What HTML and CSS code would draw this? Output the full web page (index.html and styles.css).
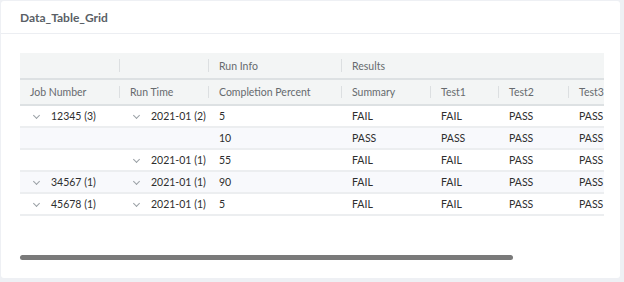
FILE: index.html
```html
<!DOCTYPE html>
<html>
<head>
<meta charset="utf-8">
<link rel="stylesheet" href="styles.css">
</head>
<body>
<div class="card">
  <div class="card-head">Data_Table_Grid</div>
  <div class="card-body">
    <div class="viewport">
      <table class="grid">
        <colgroup>
          <col class="c1"><col class="c2"><col class="c3"><col class="c4"><col class="c5"><col class="c6"><col class="c7">
        </colgroup>
        <thead>
          <tr class="group-row">
            <th class="sep"></th>
            <th class="sep"></th>
            <th class="sep">Run Info</th>
            <th colspan="4">Results</th>
          </tr>
          <tr class="head-row">
            <th class="sep">Job Number</th>
            <th class="sep">Run Time</th>
            <th class="sep">Completion Percent</th>
            <th class="sep">Summary</th>
            <th class="sep">Test1</th>
            <th class="sep">Test2</th>
            <th>Test3</th>
          </tr>
        </thead>
        <tbody>
          <tr>
            <td><span class="chev"></span>12345 (3)</td>
            <td><span class="chev"></span>2021-01 (2)</td>
            <td>5</td><td>FAIL</td><td>FAIL</td><td>PASS</td><td>PASS</td>
          </tr>
          <tr class="alt">
            <td></td><td></td>
            <td>10</td><td>PASS</td><td>PASS</td><td>PASS</td><td>PASS</td>
          </tr>
          <tr>
            <td></td>
            <td><span class="chev"></span>2021-01 (1)</td>
            <td>55</td><td>FAIL</td><td>FAIL</td><td>PASS</td><td>PASS</td>
          </tr>
          <tr class="alt">
            <td><span class="chev"></span>34567 (1)</td>
            <td><span class="chev"></span>2021-01 (1)</td>
            <td>90</td><td>FAIL</td><td>FAIL</td><td>PASS</td><td>PASS</td>
          </tr>
          <tr>
            <td><span class="chev"></span>45678 (1)</td>
            <td><span class="chev"></span>2021-01 (1)</td>
            <td>5</td><td>FAIL</td><td>FAIL</td><td>PASS</td><td>PASS</td>
          </tr>
        </tbody>
      </table>
    </div>
    <div class="scrollbar"><div class="thumb"></div></div>
  </div>
</div>
</body>
</html>
```

FILE: styles.css
```css
html, body {
  margin: 0;
  padding: 0;
  background: #eef0f4;
  font-family: Lato, "Open Sans", sans-serif;
}
body {
  padding: 1px 4px 4px 1px;
}
.card {
  background: #ffffff;
  border-radius: 3px;
  width: 619px;
  height: 277px;
  box-sizing: border-box;
}
.card-head {
  height: 32px;
  padding: 0 19px;
  display: flex;
  align-items: center;
  font-size: 12px;
  font-weight: bold;
  color: #5a5f66;
  border-bottom: 1px solid #eceef2;
}
.card-body {
  padding: 19px 16px 0 19px;
}
.viewport {
  width: 584px;
  overflow: hidden;
}
.grid {
  border-collapse: collapse;
  table-layout: fixed;
  width: 630px;
  font-size: 10.5px;
}
.c1 { width: 100px; }
.c2 { width: 89px; }
.c3 { width: 133px; }
.c4 { width: 89px; }
.c5 { width: 68px; }
.c6 { width: 70px; }
.c7 { width: 81px; }
.grid th {
  background: #f3f5f5;
  color: #666a6e;
  font-weight: normal;
  text-align: left;
  padding: 0 10px;
  position: relative;
  white-space: nowrap;
}
.grid th.sep::after {
  content: "";
  position: absolute;
  right: 0;
  top: 6px;
  bottom: 6px;
  width: 1px;
  background: #dcdfe1;
}
.group-row th {
  height: 25px;
  border-bottom: 2px solid #dde1e3;
}
.head-row th {
  height: 24px;
  border-bottom: 2px solid #dde1e3;
}
.grid td {
  height: 20px;
  padding: 0 10px;
  color: #2e2e2e;
  white-space: nowrap;
  border-bottom: 2px solid #eceef0;
}
.grid tr.alt td {
  background: #f8f9fc;
}
.chev {
  display: inline-block;
  width: 4px;
  height: 4px;
  border-right: 1px solid #9aa0a6;
  border-bottom: 1px solid #9aa0a6;
  transform: rotate(45deg);
  margin: 0 12px 3px 4px;
  vertical-align: middle;
}
.scrollbar {
  margin-top: 39px;
  width: 584px;
  height: 5px;
}
.thumb {
  width: 493px;
  height: 5px;
  background: #7a7a7a;
  border-radius: 3px;
}
```
